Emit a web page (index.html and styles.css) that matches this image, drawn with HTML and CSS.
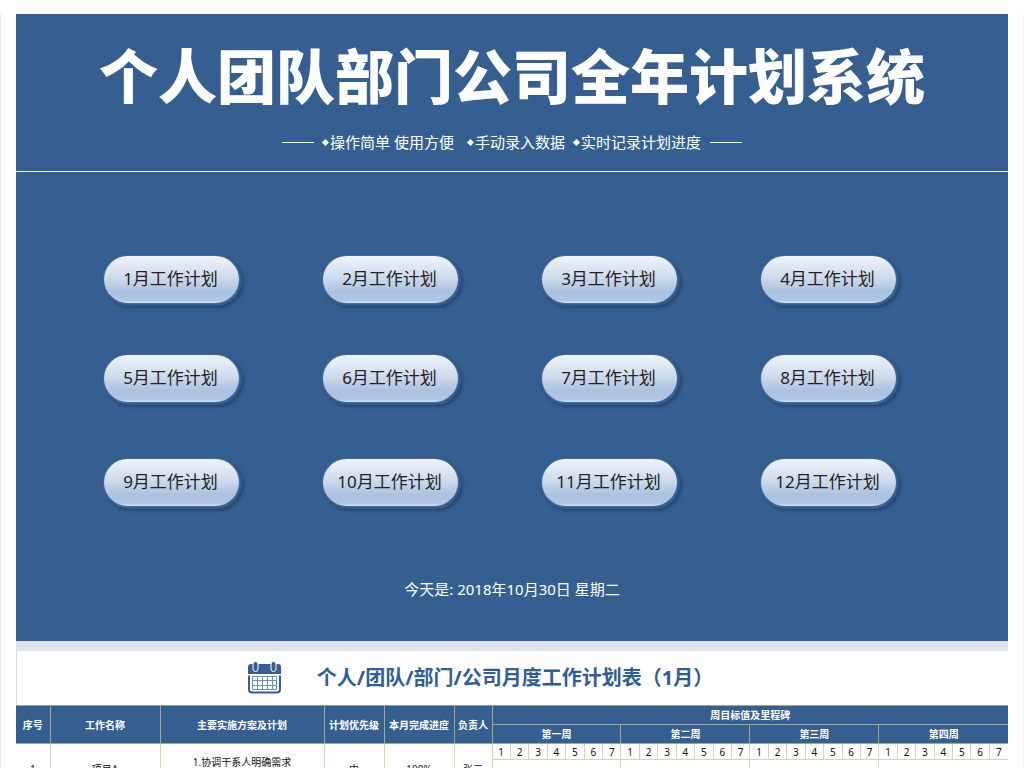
FILE: index.html
```html
<!DOCTYPE html>
<html lang="zh-CN">
<head>
  <meta charset="UTF-8">
  <meta name="viewport" content="width=device-width, initial-scale=1.0">
  <title>个人团队部门公司全年计划系统</title>
  <link rel="stylesheet" href="styles.css">
</head>
<body>
  <div class="page">
    <main class="cover">
      <header class="cover-header">
        <h1>个人团队部门公司全年计划系统</h1>
        <div class="features">
          <span class="dash"></span>
          <span class="feature">操作简单 使用方便</span>
          <span class="feature feature-mid">手动录入数据</span>
          <span class="feature">实时记录计划进度</span>
          <span class="dash"></span>
        </div>
      </header>
      <nav class="months">
        <button type="button" class="month-btn">1月工作计划</button>
        <button type="button" class="month-btn">2月工作计划</button>
        <button type="button" class="month-btn">3月工作计划</button>
        <button type="button" class="month-btn">4月工作计划</button>
        <button type="button" class="month-btn">5月工作计划</button>
        <button type="button" class="month-btn">6月工作计划</button>
        <button type="button" class="month-btn">7月工作计划</button>
        <button type="button" class="month-btn">8月工作计划</button>
        <button type="button" class="month-btn">9月工作计划</button>
        <button type="button" class="month-btn">10月工作计划</button>
        <button type="button" class="month-btn">11月工作计划</button>
        <button type="button" class="month-btn">12月工作计划</button>
      </nav>
      <p class="today">今天是: 2018年10月30日 星期二</p>
    </main>

    <section class="sheet">
      <div class="sheet-title">
        <svg class="calendar" viewBox="0 0 33 32" width="33" height="32" aria-hidden="true">
          <path fill="#335f94" d="M3 2h27a3 3 0 0 1 3 3v7H0V5a3 3 0 0 1 3-3z"/>
          <path fill="none" stroke="#335f94" stroke-width="2" d="M1 13.500v14a3 3 0 0 0 3 3h25a3 3 0 0 0 3-3v-14"/>
          <g fill="#335f94" stroke="#fff" stroke-width="1">
            <rect x="5" y="-0.500" width="5" height="10" rx="2.500"/>
            <rect x="23" y="-0.500" width="5" height="10" rx="2.500"/>
          </g>
          <path fill="none" stroke="#6f8fb6" stroke-width="1" d="M4.500 14.500h24v13h-24zM4.500 18.500h24M4.500 23.500h24M9.500 14.500v13M14.500 14.500v13M19.500 14.500v13M24.500 14.500v13"/>
        </svg>
        <h2>个人/团队/部门/公司月度工作计划表（1月）</h2>
      </div>
      <table class="plan">
        <colgroup>
          <col class="col-no">
          <col class="col-name">
          <col class="col-plan">
          <col class="col-level">
          <col class="col-progress">
          <col class="col-owner">
          <col span="28">
        </colgroup>
        <thead>
          <tr class="head-row">
            <th rowspan="2">序号</th>
            <th rowspan="2">工作名称</th>
            <th rowspan="2">主要实施方案及计划</th>
            <th rowspan="2">计划优先级</th>
            <th rowspan="2">本月完成进度</th>
            <th rowspan="2">负责人</th>
            <th colspan="28">周目标值及里程碑</th>
          </tr>
          <tr class="head-row">
            <th colspan="7">第一周</th>
            <th colspan="7">第二周</th>
            <th colspan="7">第三周</th>
            <th colspan="7">第四周</th>
          </tr>
        </thead>
        <tbody>
          <tr class="day-row">
            <td rowspan="2">1</td>
            <td rowspan="2">项目A</td>
            <td rowspan="2" class="steps">1.协调干系人明确需求</td>
            <td rowspan="2">中</td>
            <td rowspan="2">100%</td>
            <td rowspan="2">张三</td>
            <td>1</td><td>2</td><td>3</td><td>4</td><td>5</td><td>6</td><td>7</td>
            <td>1</td><td>2</td><td>3</td><td>4</td><td>5</td><td>6</td><td>7</td>
            <td>1</td><td>2</td><td>3</td><td>4</td><td>5</td><td>6</td><td>7</td>
            <td>1</td><td>2</td><td>3</td><td>4</td><td>5</td><td>6</td><td>7</td>
          </tr>
          <tr class="goal-row">
            <td colspan="7"></td>
            <td colspan="7"></td>
            <td colspan="7"></td>
            <td colspan="7"></td>
          </tr>
        </tbody>
      </table>
    </section>
  </div>
</body>
</html>
```
FILE: styles.css
```css
* {
  box-sizing: border-box;
}

body {
  margin: 0;
  padding-top: 14px;
  background: #fff;
  font-family: "Noto Sans", "Noto Sans CJK SC", sans-serif;
}

.page {
  padding: 0 15px;
  border-left: 1px solid #e6ebf3;
  border-right: 1px solid #f3f3f5;
}

/* cover */
.cover {
  background: #365f91;
  color: #fff;
  border-bottom: 10px solid #dfe3ec;
}

.cover-header {
  height: 158px;
  padding-top: 16px;
  border-bottom: 1px solid #fff;
  text-align: center;
}

h1 {
  margin: 0;
  font-size: 59px;
  line-height: 88px;
  font-weight: 900;
  font-family: "Noto Sans CJK SC", sans-serif;
  white-space: nowrap;
}

.features {
  display: flex;
  justify-content: center;
  align-items: center;
  gap: 9px;
  margin-top: 12px;
  font-size: 15px;
  line-height: 24px;
}

.feature {
  display: flex;
  align-items: center;
  gap: 2px;
}

.feature::before {
  content: "";
  width: 5px;
  height: 5px;
  background: #fff;
  transform: rotate(45deg);
}

.feature-mid {
  margin-left: 5px;
}

.dash {
  width: 32px;
  height: 1px;
  background: #fff;
}

.months {
  display: grid;
  grid-template-columns: repeat(4, 1fr);
  grid-template-rows: 99px 104px 47px;
  align-items: start;
  padding: 84px 28px 0 88px;
}

.month-btn {
  width: 135px;
  height: 47px;
  padding: 0 2px 5px 0;
  border: 0;
  border-radius: 24px;
  background: linear-gradient(#f0f4fa 0%, #cfdbec 45%, #adc2df 75%, #b0c5e2 94%, #d4e0f0 100%);
  box-shadow: 0 0 0 1px #416c9f, 1px 1px 0 2px #335b8c, 3px 3px 4px 1px #1f3c60;
  color: #222;
  font-family: inherit;
  font-size: 17px;
  cursor: pointer;
}

.today {
  margin: 0;
  padding: 71px 0 40px;
  font-size: 15px;
  line-height: 24px;
  text-align: center;
}

/* monthly sheet */
.sheet-title {
  display: flex;
  justify-content: center;
  align-items: center;
  gap: 36px;
  height: 54px;
  padding-right: 64px;
  border-left: 1px solid #d9d9d9;
}

.calendar {
  overflow: visible;
}

h2 {
  margin: 0;
  color: #2f5d95;
  font-size: 20px;
  line-height: 30px;
  font-weight: bold;
}

.plan {
  width: 100%;
  table-layout: fixed;
  border-collapse: collapse;
  font-size: 10px;
  line-height: 14px;
  text-align: center;
  color: #111;
}

.col-no {
  width: 34px;
}

.col-name {
  width: 110px;
}

.col-plan {
  width: 164px;
}

.col-level {
  width: 60px;
}

.col-progress {
  width: 70px;
}

.col-owner {
  width: 38px;
}

.plan th,
.plan td {
  padding: 0;
  border: 1px solid #d8d3b8;
  white-space: nowrap;
}

.plan th {
  background: #365f91;
  border-color: #a5a78c;
  color: #fff;
}

.plan tr:first-child > :first-child {
  border-left-width: 0;
}

.plan tr > :last-child {
  border-right-width: 0;
}

.head-row {
  height: 19px;
}

.day-row {
  height: 16px;
}

.goal-row {
  height: 34px;
}

.plan .steps {
  padding-top: 11px;
  vertical-align: top;
}
```
